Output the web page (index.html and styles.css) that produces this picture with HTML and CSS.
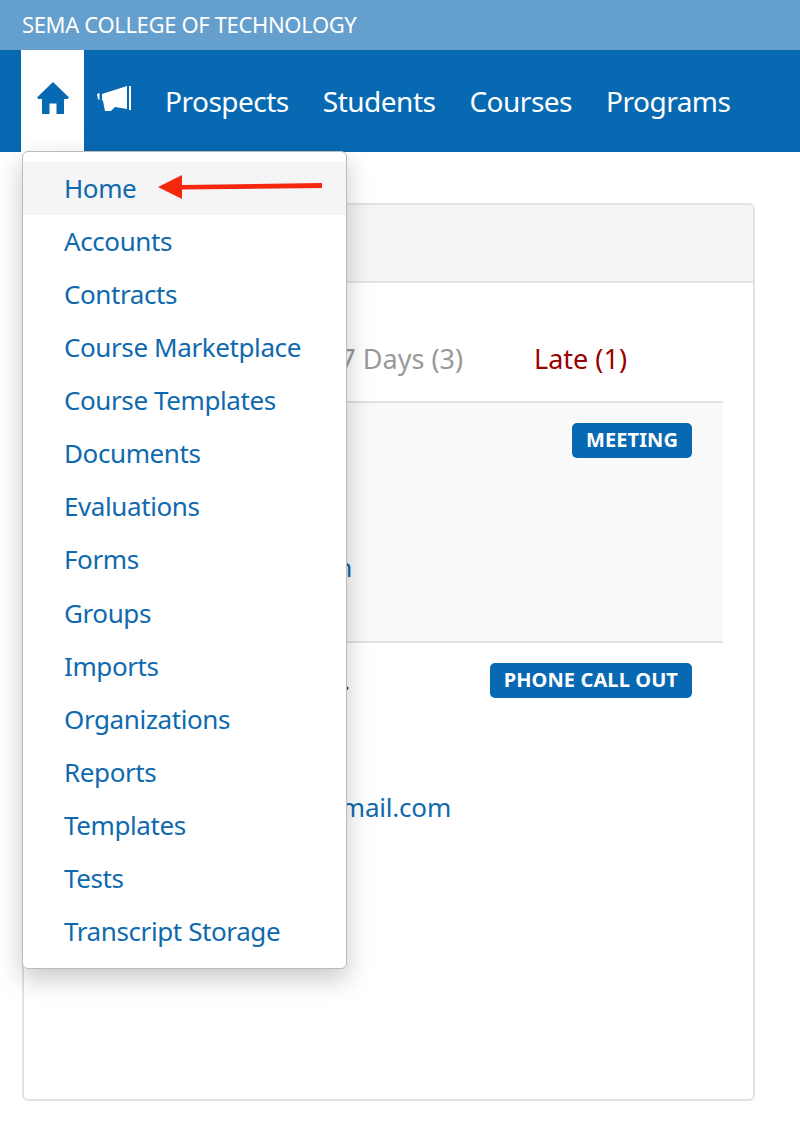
FILE: index.html
```html
<!DOCTYPE html>
<html>
<head>
<meta charset="UTF-8">
<meta name="viewport" content="width=device-width, initial-scale=1.0">
<title>Sema College of Technology</title>
<link rel="stylesheet" href="styles.css">
</head>
<body>
	<!-- School name -->
	<div class="top-bar">SEMA COLLEGE OF TECHNOLOGY</div>

	<!-- Main nav -->
	<nav class="main-nav">
		<a href="#" class="nav-icon nav-home">
			<svg width="32" height="32" viewBox="0 0 32 32"><path fill="#0869b3" d="M16 0L32 15.500L30.500 17H27V32H19.500V21.500H12.500V32H5V17H1.500L0 15.500Z"/></svg>
		</a>
		<a href="#" class="nav-icon nav-announce">
			<svg width="36" height="28" viewBox="0 0 36 28"><path fill="#fff" d="M0 8L2.500 7V14L1 13ZM5 8L30 0V23L18 21L14 25H8L6 15L5 14ZM32 0H34V24H32Z"/></svg>
		</a>
		<a href="#" class="nav-link">Prospects</a>
		<a href="#" class="nav-link">Students</a>
		<a href="#" class="nav-link">Courses</a>
		<a href="#" class="nav-link">Programs</a>
	</nav>

	<!-- Dropdown under the home tab -->
	<div class="home-menu">
		<a href="#" class="menu-item active">Home</a>
		<a href="#" class="menu-item">Accounts</a>
		<a href="#" class="menu-item">Contracts</a>
		<a href="#" class="menu-item">Course Marketplace</a>
		<a href="#" class="menu-item">Course Templates</a>
		<a href="#" class="menu-item">Documents</a>
		<a href="#" class="menu-item">Evaluations</a>
		<a href="#" class="menu-item">Forms</a>
		<a href="#" class="menu-item">Groups</a>
		<a href="#" class="menu-item">Imports</a>
		<a href="#" class="menu-item">Organizations</a>
		<a href="#" class="menu-item">Reports</a>
		<a href="#" class="menu-item">Templates</a>
		<a href="#" class="menu-item">Tests</a>
		<a href="#" class="menu-item">Transcript Storage</a>
	</div>

	<!-- Red callout arrow -->
	<svg class="callout-arrow" width="166" height="26" viewBox="0 0 166 26"><path fill="#f5280f" d="M0 13L24 1V11L164 9V14L24 15.500V25Z"/></svg>

	<!-- Activity card -->
	<div class="card">
		<div class="card-header"></div>
		<div class="tabs">
			<a href="#" class="tab">7 Days (3)</a>
			<a href="#" class="tab tab-late">Late (1)</a>
		</div>
		<div class="row row-shaded">
			<div class="row-text row-text-first">
				<a href="#" class="row-link row-link-first">n</a>
			</div>
			<span class="badge">MEETING</span>
		</div>
		<div class="row">
			<div class="row-text row-text-second">
				<div class="row-dot">.</div>
				<a href="#" class="row-link row-link-second">mail.com</a>
			</div>
			<span class="badge">PHONE CALL OUT</span>
		</div>
	</div>
</body>
</html>
```

FILE: styles.css
```css
body {
	font-family: "Noto Sans", Arial, sans-serif;
	margin: 0;
	padding: 0;
	background-color: #fff;
}

a {
	text-decoration: none;
}

/* Styles for top bars */
.top-bar {
	height: 50px;
	line-height: 48px;
	padding-left: 22px;
	box-sizing: border-box;
	background-color: #659fcd;
	color: #fff;
	font-size: 22px;
	letter-spacing: -0.35px;
}

.main-nav {
	display: flex;
	height: 102px;
	padding-left: 21px;
	background-color: #0869b3;
}

.nav-icon {
	display: flex;
	justify-content: center;
	padding-top: 32px;
	box-sizing: border-box;
}

.nav-home {
	width: 63px;
	background-color: #fff;
}

.nav-announce {
	width: 68px;
	padding-top: 36px;
	margin-left: 13px;
	justify-content: flex-start;
}

.nav-link {
	margin-right: 34px;
	line-height: 102px;
	color: #fff;
	font-size: 28px;
	letter-spacing: -0.5px;
}

/* Styles for dropdown */
.home-menu {
	position: absolute;
	top: 151px;
	left: 22px;
	z-index: 10;
	width: 325px;
	height: 818px;
	padding-top: 10px;
	box-sizing: border-box;
	background-color: #fff;
	border: 1px solid #bbb;
	border-radius: 6px;
	box-shadow: 0 10px 26px rgba(0, 0, 0, 0.22);
}

.menu-item {
	display: block;
	height: 53.07px;
	line-height: 53px;
	padding-left: 41px;
	color: #0f69ae;
	font-size: 26px;
	letter-spacing: -0.4px;
}

.menu-item.active {
	background-color: #f5f5f5;
}

.callout-arrow {
	position: absolute;
	top: 174px;
	left: 158px;
	z-index: 11;
}

/* Styles for card */
.card {
	height: 898px;
	width: 733px;
	margin: 51px 0 0 22px;
	box-sizing: border-box;
	border: 2px solid #e2e2e2;
	border-radius: 6px;
}

.card-header {
	height: 76px;
	background-color: #f5f5f5;
	border-bottom: 2px solid #e2e2e2;
}

.tabs {
	display: flex;
	justify-content: flex-end;
	gap: 71px;
	height: 118px;
	margin-right: 126px;
	line-height: 152px;
	font-size: 27px;
}

.tab {
	color: #999;
}

.tab-late {
	color: #990000;
}

.row {
	display: flex;
	justify-content: space-between;
	align-items: flex-start;
	width: 699px;
	min-height: 240px;
	padding: 20px 31px 0 0;
	box-sizing: border-box;
	border-top: 2px solid #e2e2e2;
}

.row-shaded {
	background-color: #f9f9f9;
}

.row-text {
	text-align: right;
	font-size: 26px;
	letter-spacing: -0.2px;
}

.row-text-first {
	width: 328px;
	padding-top: 126px;
}

.row-text-second {
	width: 427px;
}

.row-dot {
	padding-right: 101px;
	line-height: 34px;
	color: #333;
}

.row-link {
	display: block;
	color: #0f69ae;
}

.row-link-second {
	padding-top: 92px;
}

.badge {
	height: 35px;
	line-height: 34px;
	padding: 0 14px;
	box-sizing: border-box;
	background-color: #0869b3;
	border-radius: 5px;
	color: #fff;
	font-size: 20px;
	font-weight: 700;
	letter-spacing: 0.1px;
}
```
